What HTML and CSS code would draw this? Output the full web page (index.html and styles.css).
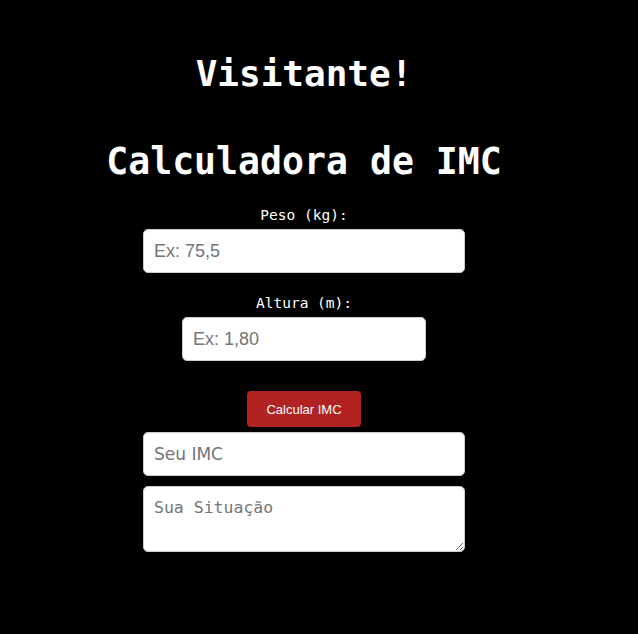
FILE: index.html
```html
<!DOCTYPE html>
<html lang="pt-BR">
  <head>
    <meta charset="utf-8" />
    <meta name="viewport" content="width=device-width, initial-scale=1" />
    <link rel="stylesheet" href="styles.css">
    <title>Calculadora de IMC</title>
  </head>
  <body>
    <div class="page">
      <h2 class="greeting">Visitante!</h2>
      <h1 class="title">Calculadora de IMC</h1>

      <form class="imc-form">
        <label class="label" for="peso">Peso (kg):</label>
        <input class="field field-wide" id="peso" type="text" placeholder="Ex: 75,5" />

        <label class="label label-altura" for="altura">Altura (m):</label>
        <input class="field field-narrow" id="altura" type="text" placeholder="Ex: 1,80" />

        <button class="btn-calc" type="button">Calcular IMC</button>

        <input class="field field-wide result" type="text" placeholder="Seu IMC" readonly />
        <textarea class="situacao" placeholder="Sua Situação" readonly></textarea>
      </form>
    </div>
  </body>
</html>
```

FILE: styles.css
```css
body {
  margin: 0;
  background-color: #000;
  color: #fff;
}

.page {
  width: 608px;
  display: flex;
  flex-direction: column;
  align-items: center;
  font-family: "DejaVu Sans Mono", monospace;
}

.greeting {
  margin: 52px 0 0;
  font-size: 36px;
  line-height: 44px;
  font-weight: bold;
}

.title {
  margin: 44px 0 0;
  font-size: 36.5px;
  line-height: 44px;
  font-weight: bold;
}

.imc-form {
  display: flex;
  flex-direction: column;
  align-items: center;
  margin-top: 22px;
}

.label {
  font-size: 14.5px;
  line-height: 18px;
  margin-bottom: 5px;
}

.label-altura {
  margin-top: 21px;
}

.field {
  box-sizing: border-box;
  height: 44px;
  padding: 0 10px;
  border: 1px solid #ccc;
  border-radius: 5px;
  background: #fff;
  font-family: "Liberation Sans", Arial, sans-serif;
  font-size: 18px;
  color: #333;
}

.field::placeholder {
  color: #757575;
}

.field-wide {
  width: 322px;
}

.field-narrow {
  width: 244px;
}

.btn-calc {
  margin-top: 30px;
  width: 114px;
  height: 36px;
  border: none;
  border-radius: 4px;
  background-color: #b22222;
  color: #fff;
  font-family: "Liberation Sans", Arial, sans-serif;
  font-size: 13px;
}

.result {
  margin-top: 5px;
  font-family: "DejaVu Sans", Verdana, sans-serif;
  font-size: 17px;
}

.situacao {
  box-sizing: border-box;
  width: 322px;
  height: 66px;
  margin-top: 10px;
  padding: 11px 10px;
  border: 1px solid #ccc;
  border-radius: 5px;
  background: #fff;
  font-family: "DejaVu Sans Mono", monospace;
  font-size: 16.5px;
  resize: both;
}

.situacao::placeholder {
  color: #757575;
}
```
